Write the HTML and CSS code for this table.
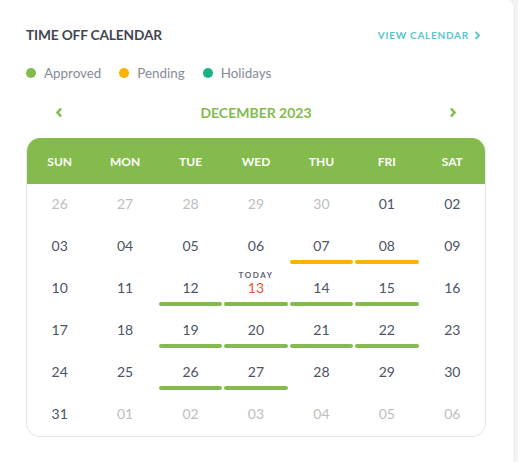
FILE: index.html
```html
<!DOCTYPE html>
<html>
<head>
<meta charset="utf-8">
<link rel="stylesheet" href="styles.css">
</head>
<body>
<div class="panel">
  <div class="top">
    <h2 class="title">TIME OFF CALENDAR</h2>
    <a class="view">VIEW CALENDAR
      <svg width="7" height="9" viewBox="0 0 7 9"><path d="M1.5 1 L5 4.5 L1.5 8" fill="none" stroke="#58c4d0" stroke-width="1.8"/></svg>
    </a>
  </div>
  <div class="legend">
    <span class="item"><i class="dot approved"></i>Approved</span>
    <span class="item"><i class="dot pending"></i>Pending</span>
    <span class="item"><i class="dot holiday"></i>Holidays</span>
  </div>
  <div class="nav">
    <span class="chev"><svg width="8" height="11" viewBox="0 0 8 11"><path d="M6 1.5 L2.5 5.5 L6 9.5" fill="none" stroke="#84bb4c" stroke-width="2.6"/></svg></span>
    <span class="month">DECEMBER 2023</span>
    <span class="chev"><svg width="8" height="11" viewBox="0 0 8 11"><path d="M2 1.5 L5.5 5.5 L2 9.5" fill="none" stroke="#84bb4c" stroke-width="2.6"/></svg></span>
  </div>
  <div class="card">
    <div class="head">
      <span>SUN</span><span>MON</span><span>TUE</span><span>WED</span><span>THU</span><span>FRI</span><span>SAT</span>
    </div>
    <div class="days">
      <div class="cell muted"><span class="n">26</span></div>
      <div class="cell muted"><span class="n">27</span></div>
      <div class="cell muted"><span class="n">28</span></div>
      <div class="cell muted"><span class="n">29</span></div>
      <div class="cell muted"><span class="n">30</span></div>
      <div class="cell"><span class="n">01</span></div>
      <div class="cell"><span class="n">02</span></div>

      <div class="cell"><span class="n">03</span></div>
      <div class="cell"><span class="n">04</span></div>
      <div class="cell"><span class="n">05</span></div>
      <div class="cell"><span class="n">06</span></div>
      <div class="cell"><span class="n">07</span><i class="bar pending"></i></div>
      <div class="cell"><span class="n">08</span><i class="bar pending"></i></div>
      <div class="cell"><span class="n">09</span></div>

      <div class="cell"><span class="n">10</span></div>
      <div class="cell"><span class="n">11</span></div>
      <div class="cell"><span class="n">12</span><i class="bar approved"></i></div>
      <div class="cell today"><span class="tag">TODAY</span><span class="n">13</span><i class="bar approved"></i></div>
      <div class="cell"><span class="n">14</span><i class="bar approved"></i></div>
      <div class="cell"><span class="n">15</span><i class="bar approved"></i></div>
      <div class="cell"><span class="n">16</span></div>

      <div class="cell"><span class="n">17</span></div>
      <div class="cell"><span class="n">18</span></div>
      <div class="cell"><span class="n">19</span><i class="bar approved"></i></div>
      <div class="cell"><span class="n">20</span><i class="bar approved"></i></div>
      <div class="cell"><span class="n">21</span><i class="bar approved"></i></div>
      <div class="cell"><span class="n">22</span><i class="bar approved"></i></div>
      <div class="cell"><span class="n">23</span></div>

      <div class="cell"><span class="n">24</span></div>
      <div class="cell"><span class="n">25</span></div>
      <div class="cell"><span class="n">26</span><i class="bar approved"></i></div>
      <div class="cell"><span class="n">27</span><i class="bar approved"></i></div>
      <div class="cell"><span class="n">28</span></div>
      <div class="cell"><span class="n">29</span></div>
      <div class="cell"><span class="n">30</span></div>

      <div class="cell"><span class="n">31</span></div>
      <div class="cell muted"><span class="n">01</span></div>
      <div class="cell muted"><span class="n">02</span></div>
      <div class="cell muted"><span class="n">03</span></div>
      <div class="cell muted"><span class="n">04</span></div>
      <div class="cell muted"><span class="n">05</span></div>
      <div class="cell muted"><span class="n">06</span></div>
    </div>
  </div>
</div>
</body>
</html>
```

FILE: styles.css
```css
html, body {
  margin: 0;
  padding: 0;
}
body {
  background: #f2f2f3;
  font-family: Lato, "Open Sans", sans-serif;
  width: 518px;
  height: 462px;
  overflow: hidden;
}
.panel {
  width: 513px;
  height: 462px;
  box-sizing: border-box;
  background: #fff;
  border-top-right-radius: 6px;
  padding: 25px 27px 0 26px;
}
.top {
  display: flex;
  justify-content: space-between;
  align-items: center;
  height: 20px;
}
.title {
  margin: 0;
  font-size: 13.7px;
  font-weight: 700;
  color: #3f4651;
  line-height: 20px;
  letter-spacing: -0.15px;
}
.view {
  display: flex;
  align-items: center;
  gap: 5px;
  margin-right: 5px;
  font-size: 10px;
  font-weight: 700;
  letter-spacing: 0.75px;
  color: #58c4d0;
}
.legend {
  display: flex;
  margin-top: 18px;
  height: 20px;
  align-items: center;
}
.item {
  display: flex;
  align-items: center;
  font-size: 13.4px;
  color: #858b95;
  margin-right: 18px;
}
.dot {
  width: 10px;
  height: 10px;
  border-radius: 50%;
  margin: 0 8px 0 0;
}
.dot.approved { background: #84bb4c; }
.dot.pending { background: #fbb203; }
.dot.holiday { background: #17b485; }
.nav {
  display: grid;
  grid-template-columns: repeat(7, 1fr);
  margin-top: 19px;
  height: 20px;
  align-items: center;
}
.chev {
  display: flex;
  justify-content: center;
}
.month {
  grid-column: 2 / 7;
  text-align: center;
  font-size: 14px;
  font-weight: 700;
  color: #84bb4c;
}
.card {
  margin-top: 16px;
  border: 1px solid #e8e8e8;
  border-top: 0;
  border-radius: 14px;
  overflow: hidden;
}
.head {
  display: grid;
  grid-template-columns: repeat(7, 1fr);
  height: 46px;
  align-items: center;
  background: #84bb4c;
  color: #fff;
  font-size: 12px;
  font-weight: 700;
  text-align: center;
}
.days {
  display: grid;
  grid-template-columns: repeat(7, 1fr);
  grid-auto-rows: 42px;
}
.cell {
  position: relative;
  display: flex;
  flex-direction: column;
  align-items: stretch;
  padding-top: 12px;
  box-sizing: border-box;
}
.n {
  text-align: center;
  font-size: 14px;
  line-height: 16px;
  color: #4c5364;
}
.muted .n { color: #bdbdbd; }
.today .n { color: #f4522d; }
.tag {
  position: absolute;
  top: 2px;
  left: 0;
  right: 0;
  text-align: center;
  font-size: 8px;
  line-height: 10px;
  font-weight: 700;
  letter-spacing: 1.6px;
  color: #5c6270;
}
.bar {
  display: block;
  height: 4px;
  margin: 6px 1px 0;
  border-radius: 2px;
}
.bar.approved { background: #84bb4c; }
.bar.pending { background: #fbb203; }
```
